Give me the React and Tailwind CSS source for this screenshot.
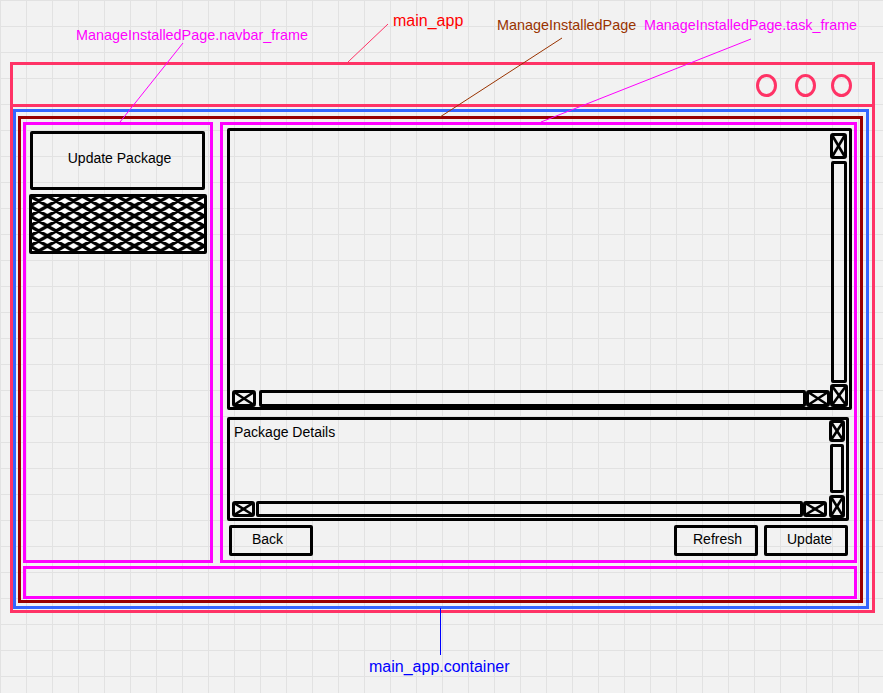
import React from "react";

function XBtn({ w, h, className = "" }) {
  return (
    <svg width={w} height={h} viewBox={`0 0 ${w} ${h}`} className={`block shrink-0 ${className}`}>
      <line x1="2" y1="2" x2={w - 2} y2={h - 2} stroke="#000" strokeWidth="2.6" />
      <line x1={w - 2} y1="2" x2="2" y2={h - 2} stroke="#000" strokeWidth="2.6" />
      <rect x="1.5" y="1.5" width={w - 3} height={h - 3} rx="1.5" fill="none" stroke="#000" strokeWidth="3" />
    </svg>
  );
}

function Hatch() {
  const w = 17.4;
  const h = 10;
  const d = [];
  for (const [ox, oy] of [[0, 0], [w, 0], [-w, 0], [0, h], [0, -h]]) {
    d.push(`M${ox} ${oy}L${ox + w} ${oy + h}`);
    d.push(`M${ox} ${oy + h}L${ox + w} ${oy}`);
  }
  return (
    <svg width="172" height="54" className="block">
      <defs>
        <pattern id="mesh" width={w} height={h} patternUnits="userSpaceOnUse" x="-2" y="-1">
          <path d={d.join("")} stroke="#000" strokeWidth="3.3" fill="none" />
        </pattern>
      </defs>
      <rect width="172" height="54" fill="#fff" />
      <rect width="172" height="54" fill="url(#mesh)" />
    </svg>
  );
}

export default function App() {
  return (
    <div className="relative w-[883px] h-[693px] overflow-hidden bg-[#f2f2f2] [background-image:linear-gradient(to_right,#e2e2e2_1px,transparent_1px),linear-gradient(to_bottom,#e2e2e2_1px,transparent_1px)] [background-size:26px_26px] font-['Liberation_Sans',Arial,sans-serif] text-black">
      <div className="pt-[62px] pl-[10px]">
        {/* main_app */}
        <div className="w-[865px] h-[551px] border-[3px] border-[#ff3366] flex flex-col">
          {/* title bar */}
          <div className="h-[42px] shrink-0 border-b-[3px] border-[#ff3366] flex items-center justify-end pr-[20px]">
            <div className="mt-[2px] w-[21px] h-[23px] rounded-[50%] border-[3px] border-[#ff3366]" />
            <div className="mt-[2px] ml-[18px] w-[21px] h-[23px] rounded-[50%] border-[3px] border-[#ff3366]" />
            <div className="mt-[2px] ml-[15px] w-[21px] h-[23px] rounded-[50%] border-[3px] border-[#ff3366]" />
          </div>
          {/* body */}
          <div className="flex-1 pt-[2px] pr-[3px] pb-[1px] flex flex-col">
            {/* container */}
            <div className="flex-1 border-[3px] border-[#3366ff] pt-[4px] pl-[2px] pr-[3px] pb-[3px] flex flex-col">
              {/* ManageInstalledPage */}
              <div className="flex-1 border-[3px] border-[#990000] pt-[3px] pl-[2px] pr-[3px] pb-[1px] flex flex-col gap-[3px]">
                <div className="h-[441px] flex gap-[7px]">
                  {/* navbar frame */}
                  <div className="w-[190px] shrink-0 border-[3px] border-[#ff00ff] pl-[3px] pt-[6px] flex flex-col">
                    <div className="ml-[1px] w-[175px] h-[59px] border-[3px] border-black rounded-[2px] pt-[17px] pl-[4px] text-center text-[14px] leading-none">
                      Update Package
                    </div>
                    <div className="mt-[4px] w-[178px] h-[60px] border-[3px] border-black rounded-[2px] overflow-hidden">
                      <Hatch />
                    </div>
                  </div>
                  {/* task frame */}
                  <div className="flex-1 border-[3px] border-[#ff00ff] pl-[4px] pt-[3px] flex flex-col">
                    {/* text area */}
                    <div className="w-[625px] h-[282px] border-[3px] border-black rounded-[2px] grid grid-cols-[1fr_18px] grid-rows-[1fr_auto] pl-[2px] pt-[2px] pr-[1px]">
                      <div />
                      <div className="flex flex-col">
                        <XBtn w={17} h={26} />
                        <div className="mt-[2px] mb-[1px] ml-[1px] w-[16px] flex-1 border-[3px] border-black rounded-[2px]" />
                      </div>
                      <div className="flex items-end">
                        <XBtn w={24} h={17} />
                        <div className="ml-[3px] flex-1 h-[17px] border-[3px] border-black rounded-[2px]" />
                        <XBtn w={24} h={17} />
                      </div>
                      <XBtn w={18} h={23} />
                    </div>
                    {/* details */}
                    <div className="mt-[7px] w-[622px] h-[104px] border-[3px] border-black rounded-[2px] grid grid-cols-[1fr_16px] grid-rows-[1fr_auto] pr-[1px]">
                      <div className="pl-[4px] pt-[4.5px] text-[14px] leading-none">Package Details</div>
                      <div className="flex flex-col">
                        <XBtn w={16} h={22} />
                        <div className="mt-[2px] mb-[2px] ml-[1px] w-[14px] flex-1 border-[3px] border-black rounded-[2px]" />
                      </div>
                      <div className="flex items-end pl-[2px] pr-[2px] pb-[1px]">
                        <XBtn w={23} h={16} />
                        <div className="ml-[1px] flex-1 h-[16px] border-[3px] border-black rounded-[2px]" />
                        <XBtn w={24} h={16} />
                      </div>
                      <XBtn w={16} h={23} />
                    </div>
                    {/* buttons */}
                    <div className="mt-[4px] ml-[2px] mr-[6px] h-[31px] flex justify-between">
                      <div className="w-[84px] h-[31px] border-[3px] border-black rounded-[2px] pl-[20px] pt-[3.5px] text-[14px] leading-none">Back</div>
                      <div className="flex gap-[6px]">
                        <div className="w-[84px] h-[31px] border-[3px] border-black rounded-[2px] pl-[16px] pt-[3.5px] text-[14px] leading-none">Refresh</div>
                        <div className="w-[84px] h-[31px] border-[3px] border-black rounded-[2px] pl-[20px] pt-[3.5px] text-[14px] leading-none">Update</div>
                      </div>
                    </div>
                  </div>
                </div>
                {/* status bar */}
                <div className="h-[33px] border-[3px] border-[#ff00ff]" />
              </div>
            </div>
          </div>
        </div>
      </div>

      {/* annotation leader lines */}
      <svg className="absolute left-0 top-0 pointer-events-none" width="883" height="693">
        <line x1="388" y1="24" x2="348" y2="62" stroke="#ff3366" strokeWidth="1" />
        <line x1="562" y1="38" x2="440" y2="117" stroke="#993300" strokeWidth="1" />
        <line x1="751" y1="39" x2="541" y2="122" stroke="#ff00ff" strokeWidth="1" />
        <line x1="183" y1="43" x2="120" y2="122" stroke="#ff00ff" strokeWidth="1" />
        <line x1="440.5" y1="608" x2="440.5" y2="655" stroke="#0000ff" strokeWidth="1" />
      </svg>
      <span className="absolute left-[393px] top-[13px] text-[16px] leading-none text-[#ff0000] whitespace-nowrap">main_app</span>
      <span className="absolute left-[497px] top-[18px] text-[14.4px] leading-none text-[#993300] whitespace-nowrap">ManageInstalledPage</span>
      <span className="absolute left-[644px] top-[18px] text-[14.3px] leading-none text-[#ff00ff] whitespace-nowrap">ManageInstalledPage.task_frame</span>
      <span className="absolute left-[76px] top-[28px] text-[14.4px] leading-none text-[#ff00ff] whitespace-nowrap">ManageInstalledPage.navbar_frame</span>
      <span className="absolute left-[369px] top-[659px] text-[16px] leading-none text-[#0000ff] whitespace-nowrap">main_app.container</span>
    </div>
  );
}
